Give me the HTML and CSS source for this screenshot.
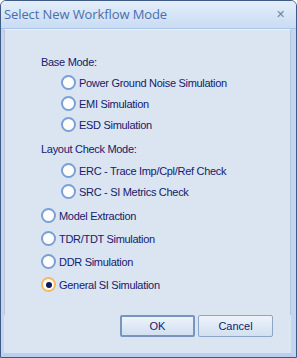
FILE: index.html
```html
<!DOCTYPE html>
<html lang="en">
<head>
    <meta charset="UTF-8">
    <title>Select New Workflow Mode</title>
    <link rel="stylesheet" href="styles.css">
</head>
<body>
    <div class="window">
        <div class="titlebar">
            <span class="title">Select New Workflow Mode</span>
            <span class="close">&#x2715;</span>
        </div>
        <div class="frame">
            <div class="content">
                <div class="row label">Base Mode:</div>
                <label class="row sub"><span class="radio"></span>Power Ground Noise Simulation</label>
                <label class="row sub"><span class="radio"></span>EMI Simulation</label>
                <label class="row sub"><span class="radio"></span>ESD Simulation</label>

                <div class="row label gap">Layout Check Mode:</div>
                <label class="row sub tight"><span class="radio"></span>ERC - Trace Imp/Cpl/Ref Check</label>
                <label class="row sub"><span class="radio"></span>SRC - SI Metrics Check</label>

                <label class="row top gap"><span class="radio"></span>Model Extraction</label>
                <label class="row top step"><span class="radio"></span>TDR/TDT Simulation</label>
                <label class="row top step"><span class="radio"></span>DDR Simulation</label>
                <label class="row top step"><span class="radio checked"></span>General SI Simulation</label>
            </div>
            <div class="buttons">
                <button class="btn default">OK</button>
                <button class="btn">Cancel</button>
            </div>
        </div>
    </div>
</body>
</html>
```

FILE: styles.css
```css
body {
    margin: 0;
    font-family: "Liberation Sans", Arial, sans-serif;
    background: #ffffff;
}

.window {
    width: 297px;
    height: 358px;
    box-sizing: border-box;
    border: 1px solid #3d5b86;
    border-radius: 6px 6px 0 0;
    overflow: hidden;
    display: flex;
    flex-direction: column;
    background: #dbe4f1;
}

.titlebar {
    height: 27px;
    flex: none;
    display: flex;
    align-items: center;
    justify-content: space-between;
    padding: 0 11px 0 3px;
    background: linear-gradient(#e4eefa, #d6e5f7 50%, #c9dcf4);
    border-bottom: 1px solid #a9c4e8;
}

.title {
    font-family: "Open Sans", "Liberation Sans", sans-serif;
    font-size: 13px;
    letter-spacing: -0.1px;
    color: #4a6fab;
    padding-bottom: 2px;
}

.close {
    font-size: 11px;
    color: #6c82a8;
}

.frame {
    flex: 1;
    display: flex;
    flex-direction: column;
    border-left: 3px solid #c3d6ef;
    border-right: 5px solid #c3d6ef;
    border-bottom: 4px solid #b9cfed;
}

.content {
    flex: 1;
    padding: 21px 0 0 36px;
    border-left: 1px solid #b6c6dc;
    border-right: 1px solid #b6c6dc;
    border-top: 1px solid #ecf2fa;
}

.row {
    display: flex;
    align-items: center;
    height: 21px;
    font-size: 11px;
    letter-spacing: -0.3px;
    color: #15216b;
}

.label {
    padding-left: 0;
}

.sub {
    padding-left: 20px;
}

.top {
    padding-left: 0;
}

.gap {
    margin-top: 3px;
}

.tight {
    margin-top: 1px;
}

.step {
    margin-top: 2px;
}

.radio {
    width: 15px;
    height: 15px;
    box-sizing: border-box;
    border: 2px solid #7a9fd8;
    border-radius: 50%;
    background: #ffffff;
    margin-right: 3px;
    display: flex;
    align-items: center;
    justify-content: center;
}

.radio.checked {
    border-color: #f6b766;
}

.radio.checked::after {
    content: "";
    width: 6px;
    height: 6px;
    border-radius: 50%;
    background: #0c1c58;
}

.buttons {
    display: flex;
    justify-content: flex-end;
    gap: 3px;
    padding: 0 18px 16px 0;
}

.btn {
    width: 75px;
    height: 22px;
    font-family: "Liberation Sans", Arial, sans-serif;
    font-size: 11px;
    color: #15216b;
    border: 1px solid #8ca6c9;
    border-radius: 2px;
    background: linear-gradient(#edf3fb, #dfe9f6 50%, #d2e0f1);
    padding: 0;
}

.btn.default {
    border: 2px solid #7a95bd;
}
```
